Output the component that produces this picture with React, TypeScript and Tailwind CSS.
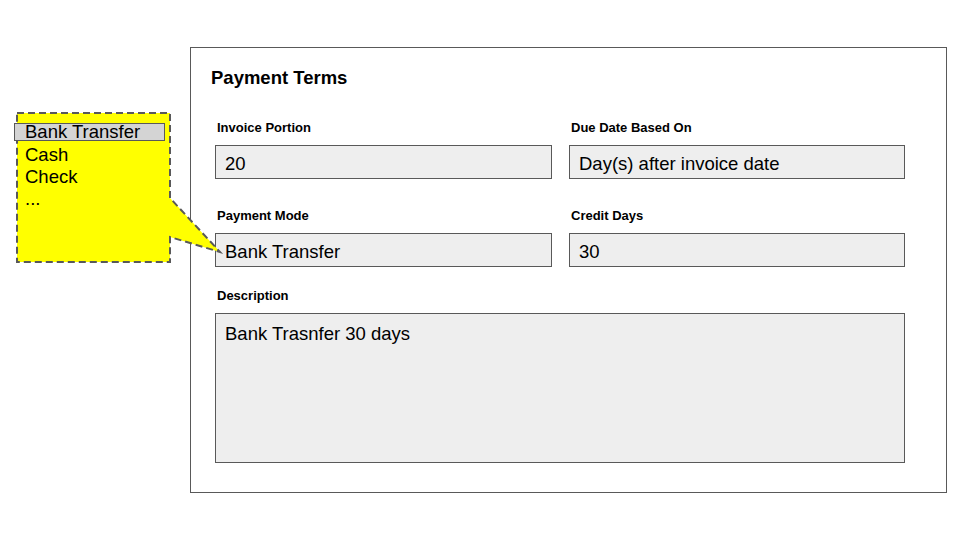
import React from "react";

type FieldProps = {
  label: string;
  value: string;
};

function Field({ label, value }: FieldProps) {
  return (
    <div className="flex flex-col">
      <div className="text-[13px] leading-[15px] font-bold pl-[2px] mb-[10px]">{label}</div>
      <div className="h-[34px] border border-[#595959] bg-[#eeeeee] flex items-center pl-[9px] pt-[2px] text-[18.5px] leading-[21px]">
        {value}
      </div>
    </div>
  );
}

// Yellow dashed callout showing the payment mode options
function OptionsCallout() {
  return (
    <>
      <svg
        className="absolute left-0 top-0 pointer-events-none"
        width="240"
        height="280"
        viewBox="0 0 240 280"
      >
        <path
          d="M17 113 H170 V198 L220 252 L170 237 V262 H17 Z"
          fill="#ffff00"
          stroke="#595959"
          strokeWidth="2"
          strokeDasharray="7 4"
          strokeLinejoin="miter"
        />
      </svg>
      <div className="absolute left-[14px] top-[123px] w-[151px] text-[18.5px] text-black">
        <div className="h-[18px] border border-[#595959] bg-[#d4d4d4] pl-[10px] leading-[16px]">Bank Transfer</div>
        <div className="mt-[2.5px] pl-[11px] leading-[22px]">Cash</div>
        <div className="pl-[11px] leading-[22px]">Check</div>
        <div className="pl-[11px] leading-[22px]">...</div>
      </div>
    </>
  );
}

export default function App() {
  return (
    <div
      className="relative w-[960px] h-[540px] bg-white text-black overflow-hidden"
      style={{ fontFamily: '"Liberation Sans", Arial, sans-serif' }}
    >
      <div className="pl-[190px] pt-[47px]">
        <div className="w-[757px] h-[446px] border border-[#595959] pt-[20px] pl-[24px] pr-[41px]">
          <h2 className="text-[18.5px] leading-[20px] font-bold -ml-[4px]">Payment Terms</h2>

          <div className="grid grid-cols-[337px_336px] gap-x-[17px] mt-[32px]">
            <Field label="Invoice Portion" value="20" />
            <Field label="Due Date Based On" value="Day(s) after invoice date" />
          </div>

          <div className="grid grid-cols-[337px_336px] gap-x-[17px] mt-[29px]">
            <Field label="Payment Mode" value="Bank Transfer" />
            <Field label="Credit Days" value="30" />
          </div>

          <div className="mt-[21px] flex flex-col">
            <div className="text-[13px] leading-[15px] font-bold pl-[2px] mb-[10px]">Description</div>
            <div className="w-[690px] h-[150px] border border-[#595959] bg-[#eeeeee] pl-[9px] pt-[9px] text-[18.5px] leading-[21px]">
              Bank Trasnfer 30 days
            </div>
          </div>
        </div>
      </div>

      <OptionsCallout />
    </div>
  );
}
